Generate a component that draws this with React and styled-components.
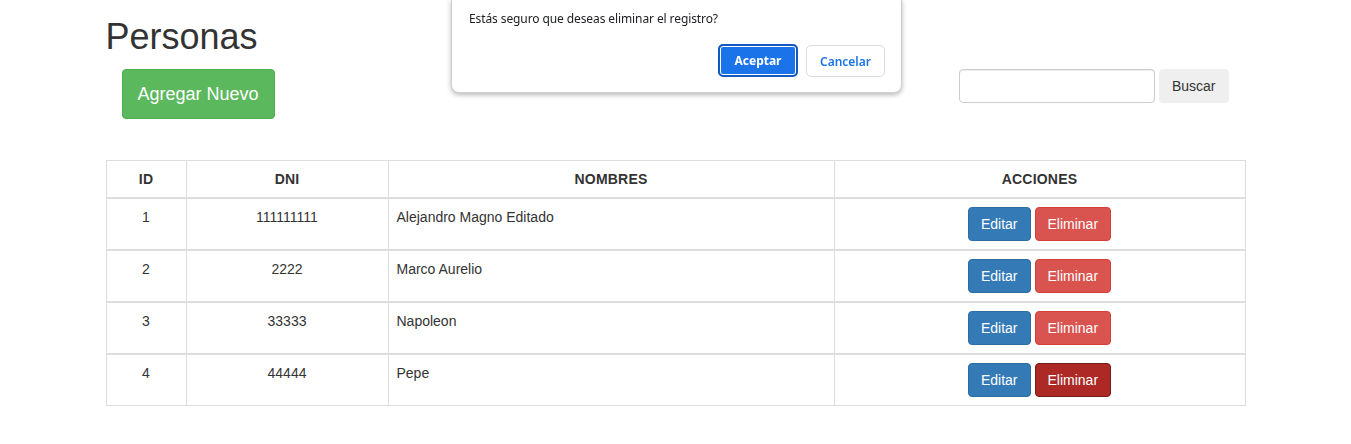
import React from "react";
import styled, { createGlobalStyle, css } from "styled-components";

const Global = createGlobalStyle`
  html, body { margin: 0; padding: 0; background: #fff; }
  body {
    font-family: "Liberation Sans", Arial, sans-serif;
    font-size: 14px;
    line-height: 1.42857;
    color: #333;
  }
  * { box-sizing: border-box; }
`;

const Container = styled.div`
  width: 1170px;
  margin: 0 auto;
  padding: 0 15px;
`;

const Title = styled.h1`
  font-size: 36px;
  font-weight: 500;
  line-height: 1.1;
  margin: 17px 0 0;
  color: #333;
`;

const Toolbar = styled.div`
  display: flex;
  justify-content: space-between;
  align-items: flex-start;
  margin-top: 12px;
  padding: 0 17px 0 16px;
`;

const SearchForm = styled.div`
  display: flex;
  gap: 4px;
`;

const SearchInput = styled.input`
  width: 196px;
  height: 34px;
  border: 1px solid #ccc;
  border-radius: 4px;
  padding: 6px 12px;
  font: inherit;
  box-shadow: inset 0 1px 1px rgba(0, 0, 0, 0.075);
`;

const variants = {
  success: css`background: #5cb85c; border-color: #4cae4c; color: #fff;`,
  primary: css`background: #337ab7; border-color: #2e6da4; color: #fff;`,
  danger: css`background: #d9534f; border-color: #d43f3a; color: #fff;`,
  dangerActive: css`background: #ac2925; border-color: #761c19; color: #fff;`,
  plain: css`background: #efefef; border-color: #efefef; color: #333;`,
};

const Button = styled.button`
  display: inline-block;
  font-family: "Liberation Sans", Arial, sans-serif;
  font-size: ${(p) => (p.$large ? "18px" : "14px")};
  line-height: ${(p) => (p.$large ? "24px" : "20px")};
  padding: ${(p) => (p.$large ? "12px 15px" : "6px 12px")};
  border: 1px solid transparent;
  border-radius: 4px;
  cursor: pointer;
  ${(p) => variants[p.$variant]}
`;

const Table = styled.table`
  width: 1140px;
  margin-top: 41px;
  border-collapse: collapse;
  border: 1px solid #ddd;
  table-layout: fixed;
`;

const Th = styled.th`
  border: 1px solid #ddd;
  border-bottom-width: 0;
  padding: 8px;
  font-weight: bold;
  text-align: center;
  line-height: 20px;
  letter-spacing: 0.2px;
  vertical-align: bottom;
`;

const Td = styled.td`
  border: 1px solid #ddd;
  border-top: 2px solid #ddd;
  padding: 8px;
  line-height: 20px;
  vertical-align: top;
  text-align: ${(p) => p.$align || "left"};
`;

const Actions = styled.div`
  display: flex;
  justify-content: center;
  gap: 4px;
`;

const Dialog = styled.div`
  position: fixed;
  top: -1px;
  left: 451px;
  width: 451px;
  background: #fff;
  border: 1px solid #d0d0d0;
  border-radius: 0 0 8px 8px;
  box-shadow: 0 2px 5px rgba(0, 0, 0, 0.28);
  padding: 11px 16px 15px 17px;
  font-family: "Noto Sans", "Open Sans", sans-serif;
  font-size: 12px;
  color: #202124;
`;

const DialogText = styled.div`
  line-height: 16px;
  letter-spacing: -0.1px;
`;

const DialogButtons = styled.div`
  display: flex;
  justify-content: flex-end;
  gap: 8px;
  margin-top: 17px;
`;

const DialogButton = styled.button`
  width: ${(p) => (p.$primary ? "80px" : "79px")};
  height: ${(p) => (p.$primary ? "33px" : "32px")};
  margin-top: ${(p) => (p.$primary ? "0" : "1px")};
  border-radius: 5px;
  font-family: "Noto Sans", "Open Sans", sans-serif;
  font-size: 12px;
  font-weight: ${(p) => (p.$primary ? 700 : 600)};
  cursor: pointer;
  ${(p) =>
    p.$primary
      ? css`
          background: #1a73e8;
          color: #fff;
          border: 2px solid #1558c0;
          box-shadow: inset 0 0 0 1px #fff;
        `
      : css`
          background: #fff;
          color: #1a73e8;
          border: 1px solid #dadce0;
        `}
`;

const rows = [
  { id: 1, dni: "111111111", name: "Alejandro Magno Editado" },
  { id: 2, dni: "2222", name: "Marco Aurelio" },
  { id: 3, dni: "33333", name: "Napoleon" },
  { id: 4, dni: "44444", name: "Pepe", active: true },
];

export default function App() {
  return (
    <>
      <Global />
      <Container>
        <Title>Personas</Title>
        <Toolbar>
          <Button $variant="success" $large>
            Agregar Nuevo
          </Button>
          <SearchForm>
            <SearchInput type="text" />
            <Button $variant="plain">Buscar</Button>
          </SearchForm>
        </Toolbar>
        <Table>
          <colgroup>
            <col style={{ width: 80 }} />
            <col style={{ width: 202 }} />
            <col style={{ width: 446 }} />
            <col style={{ width: 411 }} />
          </colgroup>
          <thead>
            <tr>
              <Th>ID</Th>
              <Th>DNI</Th>
              <Th>NOMBRES</Th>
              <Th>ACCIONES</Th>
            </tr>
          </thead>
          <tbody>
            {rows.map((r) => (
              <tr key={r.id}>
                <Td $align="center">{r.id}</Td>
                <Td $align="center">{r.dni}</Td>
                <Td>{r.name}</Td>
                <Td>
                  <Actions>
                    <Button $variant="primary">Editar</Button>
                    <Button $variant={r.active ? "dangerActive" : "danger"}>
                      Eliminar
                    </Button>
                  </Actions>
                </Td>
              </tr>
            ))}
          </tbody>
        </Table>
      </Container>
      <Dialog>
        <DialogText>Estás seguro que deseas eliminar el registro?</DialogText>
        <DialogButtons>
          <DialogButton $primary>Aceptar</DialogButton>
          <DialogButton>Cancelar</DialogButton>
        </DialogButtons>
      </Dialog>
    </>
  );
}
